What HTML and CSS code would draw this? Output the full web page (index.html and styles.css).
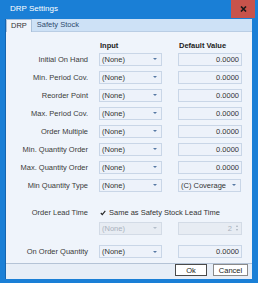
FILE: index.html
```html
<!DOCTYPE html>
<html lang="en">

<head>
    <meta charset="UTF-8">
    <title>DRP Settings</title>
    <link rel="stylesheet" href="styles.css">
</head>

<body>
    <div class="window">
        <div class="titlebar">
            <span class="title">DRP Settings</span>
            <div class="close">
                <svg width="7" height="6" viewBox="0 0 7 6"><path d="M1 0.5 L6 5.5 M6 0.5 L1 5.5" stroke="#1a1a1a" stroke-width="1.6"/></svg>
            </div>
        </div>
        <div class="frame">
            <div class="tabs">
                <div class="tab active">DRP</div>
                <div class="tab">Safety Stock</div>
            </div>
            <div class="panel">
                <div class="grid">
                    <div></div>
                    <div class="head">Input</div>
                    <div class="head">Default Value</div>

                    <div class="lbl">Initial On Hand</div>
                    <div class="box combo"><span>(None)</span><i class="arrow"></i></div>
                    <div class="box num">0.0000</div>

                    <div class="lbl">Min. Period Cov.</div>
                    <div class="box combo"><span>(None)</span><i class="arrow"></i></div>
                    <div class="box num">0.0000</div>

                    <div class="lbl">Reorder Point</div>
                    <div class="box combo"><span>(None)</span><i class="arrow"></i></div>
                    <div class="box num">0.0000</div>

                    <div class="lbl">Max. Period Cov.</div>
                    <div class="box combo"><span>(None)</span><i class="arrow"></i></div>
                    <div class="box num">0.0000</div>

                    <div class="lbl">Order Multiple</div>
                    <div class="box combo"><span>(None)</span><i class="arrow"></i></div>
                    <div class="box num">0.0000</div>

                    <div class="lbl">Min. Quantity Order</div>
                    <div class="box combo"><span>(None)</span><i class="arrow"></i></div>
                    <div class="box num">0.0000</div>

                    <div class="lbl">Max. Quantity Order</div>
                    <div class="box combo"><span>(None)</span><i class="arrow"></i></div>
                    <div class="box num">0.0000</div>

                    <div class="lbl">Min Quantity Type</div>
                    <div class="box combo"><span>(None)</span><i class="arrow"></i></div>
                    <div class="box combo"><span>(C) Coverage</span><i class="arrow"></i></div>

                    <div class="lbl end">Order Lead Time</div>
                    <div class="check end">
                        <span class="checkbox">
                            <svg width="6" height="6" viewBox="0 0 6 6"><path d="M0.8 3 L2.3 4.6 L5.3 0.9" stroke="#222" stroke-width="1.1" fill="none"/></svg>
                        </span>
                        Same as Safety Stock Lead Time
                    </div>

                    <div></div>
                    <div class="box combo disabled"><span>(None)</span><i class="arrow"></i></div>
                    <div class="box num disabled spin"><span>2</span><i class="spinner"><b class="up"></b><b class="down"></b></i></div>

                    <div class="lbl end">On Order Quantity</div>
                    <div class="box combo end"><span>(None)</span><i class="arrow"></i></div>
                    <div class="box num end">0.0000</div>
                </div>
            </div>
            <div class="footer">
                <button class="btn default">Ok</button>
                <button class="btn">Cancel</button>
            </div>
        </div>
    </div>
</body>

</html>
```

FILE: styles.css
```css
body {
    margin: 0;
    font-family: "Liberation Sans", Arial, sans-serif;
    font-size: 7.5px;
    background-color: #b9c93a;
}

.window {
    width: 258px;
    height: 283px;
    background-color: #1a7fd6;
    display: flex;
    flex-direction: column;
}

.titlebar {
    height: 19px;
    display: flex;
    justify-content: space-between;
    align-items: flex-start;
}

.title {
    color: white;
    font-size: 8px;
    padding-left: 10px;
    line-height: 18px;
}

.close {
    width: 24px;
    height: 18px;
    margin-right: 3px;
    background-color: #c8534b;
    display: flex;
    justify-content: center;
    align-items: center;
}

.frame {
    flex: 1;
    margin: 0 6px 4px 5px;
    background-color: #eff4fb;
    display: flex;
    flex-direction: column;
    border-left: 1px solid #1565b0;
}

.tabs {
    height: 12px;
    display: flex;
    background-color: #cde1f6;
    border-bottom: 1px solid #b9cde4;
}

.tab {
    padding: 0 5px;
    line-height: 12px;
    color: #2d4a6e;
}

.tab.active {
    padding: 0 4px;
    background-color: #eff4fb;
    border: 1px solid #a9c0da;
    border-bottom: none;
    height: 12px;
    line-height: 11px;
    color: #333;
}

.panel {
    flex: 1;
    padding-top: 8px;
}

.grid {
    display: grid;
    grid-template-columns: 93px 79px 64px;
    grid-template-rows: 10px repeat(8, 18px) 25px 18px 21px;
    align-items: center;
}

.end {
    align-self: end;
    height: 13px;
    line-height: 13px;
}

.head {
    font-weight: bold;
    color: #222;
    padding-left: 1px;
}

.lbl {
    text-align: right;
    padding-right: 11px;
    color: #3a3a3a;
}

.box {
    height: 13px;
    box-sizing: border-box;
    border: 1px solid #c9d6e7;
    background-color: #edf2fa;
    color: #333;
    display: flex;
    align-items: center;
}

.combo {
    width: 63px;
    justify-content: space-between;
    padding: 0 4px 0 2px;
}

.num {
    width: 64px;
    justify-content: flex-end;
    padding-right: 2px;
}

.arrow {
    width: 0;
    height: 0;
    border-left: 2px solid transparent;
    border-right: 2px solid transparent;
    border-top: 2px solid #5678a3;
}

.disabled {
    color: #a9b1bd;
    background-color: #e7ecf3;
    border-color: #d3dbe6;
}

.disabled .arrow {
    border-top-color: #b3bdca;
}

.spin {
    padding-right: 3px;
    gap: 4px;
}

.spinner {
    display: flex;
    flex-direction: column;
    gap: 2px;
}

.spinner b {
    width: 0;
    height: 0;
    border-left: 1.5px solid transparent;
    border-right: 1.5px solid transparent;
}

.spinner .up {
    border-bottom: 2px solid #a9b1bd;
}

.spinner .down {
    border-top: 2px solid #a9b1bd;
}

.check {
    grid-column: 2 / 4;
    display: flex;
    align-items: center;
    gap: 3px;
    padding-left: 1px;
    color: #333;
}

.checkbox {
    width: 6px;
    height: 6px;
    display: flex;
}

.footer {
    height: 16px;
    border-top: 1px solid #b4c3d6;
    background-color: #e7eef7;
    display: flex;
    justify-content: flex-end;
    align-items: flex-start;
    gap: 6px;
    padding-right: 4px;
    box-sizing: border-box;
}

.btn {
    height: 12px;
    padding: 0;
    font-family: "Liberation Sans", Arial, sans-serif;
    font-size: 7.5px;
    color: #222;
    background-color: white;
    border: 1px solid #8a8a8a;
    border-radius: 0;
    width: 35px;
}

.btn.default {
    width: 32px;
    border-color: #4a4a4a;
}
```
